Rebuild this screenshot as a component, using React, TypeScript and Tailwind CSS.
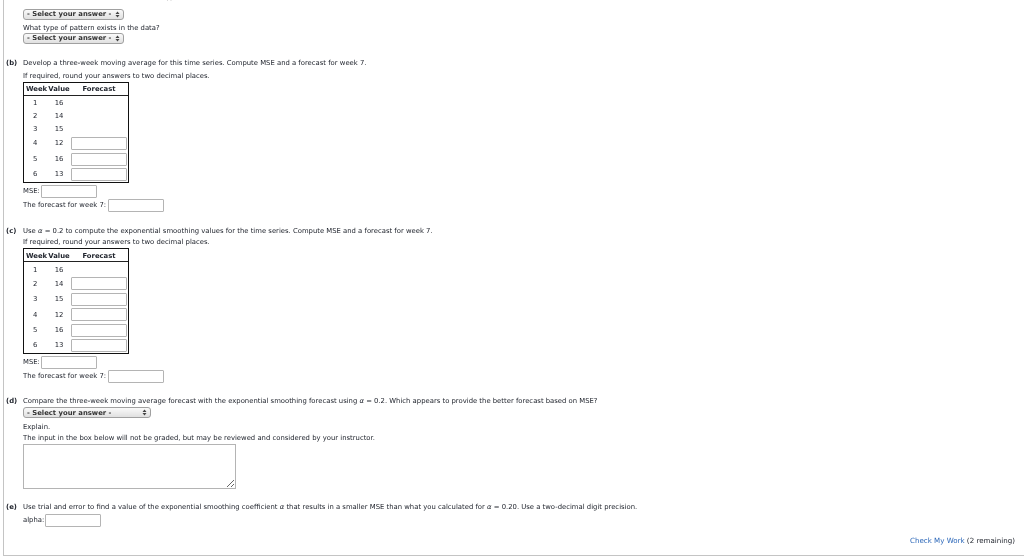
import React from 'react';

const rowsB = [
  { week: 1, value: 16, input: false },
  { week: 2, value: 14, input: false },
  { week: 3, value: 15, input: false },
  { week: 4, value: 12, input: true },
  { week: 5, value: 16, input: true },
  { week: 6, value: 13, input: true },
];

const rowsC = rowsB.map((r) => ({ ...r, input: r.week > 1 }));

function Box({ className = '' }: { className?: string }) {
  return <input type="text" aria-label="answer" className={`block h-[13px] bg-white border border-[#b4b4b4] rounded-[1px] ${className}`} />;
}

function SelectAnswer({ width }: { width: string }) {
  return (
    <div className={`flex items-center justify-between h-[11px] pl-[3px] pr-[3px] border border-[#a0a0a0] rounded-[3px] bg-gradient-to-b from-[#fafafa] to-[#e0e0e0] font-bold text-[#333] ${width}`}>
      <span>- Select your answer -</span>
      <svg width="5" height="7" viewBox="0 0 5 7" aria-hidden="true">
        <path d="M2.5 0.5 L4.5 3 H0.5 Z M2.5 6.5 L4.5 4 H0.5 Z" fill="#444" />
      </svg>
    </div>
  );
}

function ForecastTable({ rows }: { rows: typeof rowsB }) {
  return (
    <div className="w-[106px] border border-[#111]">
      <div className="flex h-[13px] items-center pt-[1px] border-b border-[#222] font-bold">
        <span className="w-[24px] pl-[2px]">Week</span>
        <span className="w-[22px] text-center">Value</span>
        <span className="flex-1 text-center">Forecast</span>
      </div>
      <div className="pt-[1px]">
        {rows.map((r) => (
          <div key={r.week} className={`flex items-center ${r.input ? 'h-[15.4px]' : 'h-[13px]'}`}>
            <span className="w-[24px] pl-[9px]">{r.week}</span>
            <span className="w-[22px] text-center">{r.value}</span>
            <div className="pl-[1px]">{r.input && <Box className="w-[56px]" />}</div>
          </div>
        ))}
      </div>
    </div>
  );
}

function MseFields() {
  return (
    <div className="mt-[1px]">
      <div className="flex items-center h-[14px] gap-[1px]">
        <span>MSE:</span>
        <Box className="w-[56px]" />
      </div>
      <div className="flex items-center h-[14px] gap-[2px]">
        <span>The forecast for week 7:</span>
        <Box className="w-[56px]" />
      </div>
    </div>
  );
}

function Part({ label, children, className = '' }: { label: string; children: React.ReactNode; className?: string }) {
  return (
    <div className={`flex ${className}`}>
      <b className="w-[19px] shrink-0 pl-[2px]">{label}</b>
      <div className="flex-1">{children}</div>
    </div>
  );
}

export default function App() {
  return (
    <div className="h-[559px] w-[1024px] overflow-hidden bg-white text-[#22262f] text-[6.85px] leading-[11px] font-['DejaVu_Sans',sans-serif] blur-[0.3px]">
      <div className="h-[556px] ml-[3px] border-l border-b border-[#c4c4c4] relative">
        <div className="absolute left-[147px] top-[-7px] text-[5px] text-[#888]">Week (t)</div>
        <div className="pl-[19px] pt-[9px]">
          <SelectAnswer width="w-[101px]" />
          <div className="mt-[2px] h-[11px] leading-[13px]">What type of pattern exists in the data?</div>
          <SelectAnswer width="w-[101px]" />
        </div>

        <Part label="(b)" className="mt-[12px] leading-[15px]">
          <div className="h-[13px] leading-[15px]">Develop a three-week moving average for this time series. Compute MSE and a forecast for week 7.</div>
          <div className="h-[13px] leading-[14px]">If required, round your answers to two decimal places.</div>
          <ForecastTable rows={rowsB} />
          <MseFields />
        </Part>

        <Part label="(c)" className="mt-[12px] leading-[14px]">
          <div className="h-[12px] leading-[14px]">Use <i>α</i> = 0.2 to compute the exponential smoothing values for the time series. Compute MSE and a forecast for week 7.</div>
          <div className="h-[12px] leading-[12px]">If required, round your answers to two decimal places.</div>
          <ForecastTable rows={rowsC} />
          <MseFields />
        </Part>

        <Part label="(d)" className="mt-[12px] leading-[12px]">
          <div className="h-[12px] leading-[12px]">Compare the three-week moving average forecast with the exponential smoothing forecast using <i>α</i> = 0.2. Which appears to provide the better forecast based on MSE?</div>
          <SelectAnswer width="w-[128px]" />
          <div className="mt-[4px] h-[11px] leading-[11px]">Explain.</div>
          <div className="h-[11px] leading-[11px]">The input in the box below will not be graded, but may be reviewed and considered by your instructor.</div>
          <textarea aria-label="explanation" className="block w-[213px] h-[45px] bg-white border border-[#b4b4b4]" />
        </Part>

        <Part label="(e)" className="mt-[12px] leading-[12px]">
          <div className="h-[12px] leading-[12px]">Use trial and error to find a value of the exponential smoothing coefficient <i>α</i> that results in a smaller MSE than what you calculated for <i>α</i> = 0.20. Use a two-decimal digit precision.</div>
          <div className="flex items-center h-[14px] gap-[1px] leading-[11px]">
            <span>alpha:</span>
            <Box className="w-[56px]" />
          </div>
        </Part>

        <div className="flex justify-end pr-[9px] mt-[8px] text-[7.1px]">
          <span><span className="text-[#2a66b8]">Check My Work</span> (2 remaining)</span>
        </div>
      </div>
    </div>
  );
}
